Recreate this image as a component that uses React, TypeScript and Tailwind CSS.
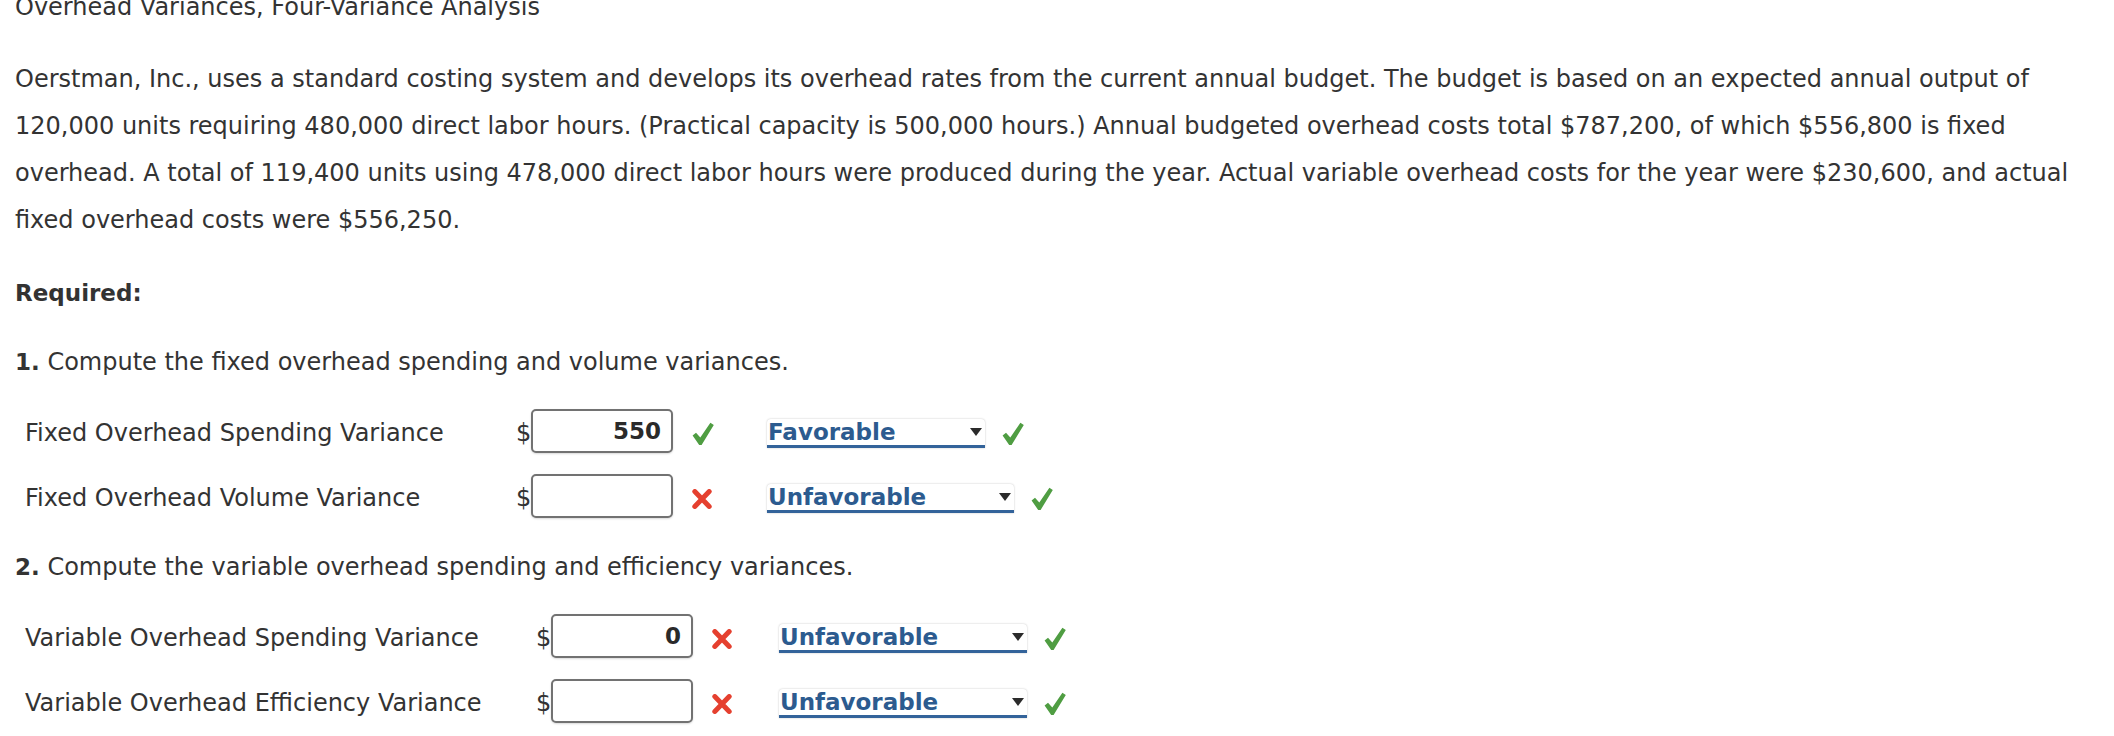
import type { ReactNode } from 'react';

type Mark = 'ok' | 'bad';

interface RowProps {
  label: string;
  labelWidth: string;
  value?: string;
  mark: Mark;
  markWidth: string;
  choice: string;
  selectWidth: string;
}

const CheckIcon = () => (
  <svg width="22" height="24" viewBox="0 0 22 24" className="shrink-0">
    <path
      d="M0.6 13.6 L4 10.8 L8.3 15.6 L18.4 0.8 L21.8 3 L9.6 23 L7.2 23 Z"
      fill="#4f9d42"
    />
  </svg>
);

const CrossIcon = () => (
  <svg width="20" height="20" viewBox="0 0 20 20" className="shrink-0">
    <path d="M2.8 2.6 L17.2 17.4 M17.2 2.6 L2.8 17.4" stroke="#e5402f" strokeWidth="5" strokeLinecap="round" />
  </svg>
);

const Select = ({ choice, width }: { choice: string; width: string }) => (
  <div
    className={`${width} h-[29px] flex items-center justify-between bg-white rounded-t-[4px] border-b-[3px] border-[#33639a] shadow-[0_0_2px_rgba(0,0,0,0.25)] pl-[1px] pr-[3px]`}
  >
    <span className="font-bold text-[23px] text-[#2c5b8f] leading-none">{choice}</span>
    <svg width="12" height="8" viewBox="0 0 12 8">
      <path d="M0 0 L12 0 L6 8 Z" fill="#2b2b2b" />
    </svg>
  </div>
);

const AnswerRow = ({ label, labelWidth, value, mark, markWidth, choice, selectWidth }: RowProps) => (
  <div className="flex items-center h-[65px] pl-[10px]">
    <div className={`${labelWidth} shrink-0`}>{label}</div>
    <span className="w-[15px]">$</span>
    <div className="w-[142px] h-[44px] mb-[5px] border-2 border-[#727272] rounded-[5px] bg-white flex items-center justify-end pr-[10px] font-bold text-[23px] text-[#2a2a2a] shadow-[0_1px_2px_rgba(0,0,0,0.15)]">
      {value}
    </div>
    <div className={`${markWidth} pl-[19px] flex items-center`}>
      {mark === 'ok' ? <CheckIcon /> : <CrossIcon />}
    </div>
    <Select choice={choice} width={selectWidth} />
    <div className="pl-[17px] flex items-center">
      <CheckIcon />
    </div>
  </div>
);

const Heading = ({ num, children }: { num: string; children: ReactNode }) => (
  <p>
    <span className="font-bold text-[23px]">{num}</span> {children}
  </p>
);

export default function App() {
  return (
    <div
      className="bg-white text-[#333333] text-[24px] leading-[47px] pl-[15px] h-[736px] overflow-hidden"
      style={{ fontFamily: '"DejaVu Sans", Verdana, sans-serif' }}
    >
      <h1 className="-mt-[16px] font-normal">Overhead Variances, Four-Variance Analysis</h1>

      <p className="mt-[25px]">
        Oerstman, Inc., uses a standard costing system and develops its overhead rates from the current annual budget. The budget is based on an expected annual output of
        <br />
        120,000 units requiring 480,000 direct labor hours. (Practical capacity is 500,000 hours.) Annual budgeted overhead costs total $787,200, of which $556,800 is fixed
        <br />
        overhead. A total of 119,400 units using 478,000 direct labor hours were produced during the year. Actual variable overhead costs for the year were $230,600, and actual
        <br />
        fixed overhead costs were $556,250.
      </p>

      <p className="mt-[26px] font-bold text-[23px]">Required:</p>

      <div className="mt-[22px]">
        <Heading num="1.">Compute the fixed overhead spending and volume variances.</Heading>
      </div>

      <div className="mt-[15px]">
        <AnswerRow
          label="Fixed Overhead Spending Variance"
          labelWidth="w-[491px]"
          value="550"
          mark="ok"
          markWidth="w-[94px]"
          choice="Favorable"
          selectWidth="w-[218px]"
        />
        <AnswerRow
          label="Fixed Overhead Volume Variance"
          labelWidth="w-[491px]"
          mark="bad"
          markWidth="w-[94px]"
          choice="Unfavorable"
          selectWidth="w-[247px]"
        />
      </div>

      <div className="mt-[13px]">
        <Heading num="2.">Compute the variable overhead spending and efficiency variances.</Heading>
      </div>

      <div className="mt-[15px]">
        <AnswerRow
          label="Variable Overhead Spending Variance"
          labelWidth="w-[511px]"
          value="0"
          mark="bad"
          markWidth="w-[86px]"
          choice="Unfavorable"
          selectWidth="w-[248px]"
        />
        <AnswerRow
          label="Variable Overhead Efficiency Variance"
          labelWidth="w-[511px]"
          mark="bad"
          markWidth="w-[86px]"
          choice="Unfavorable"
          selectWidth="w-[248px]"
        />
      </div>
    </div>
  );
}
